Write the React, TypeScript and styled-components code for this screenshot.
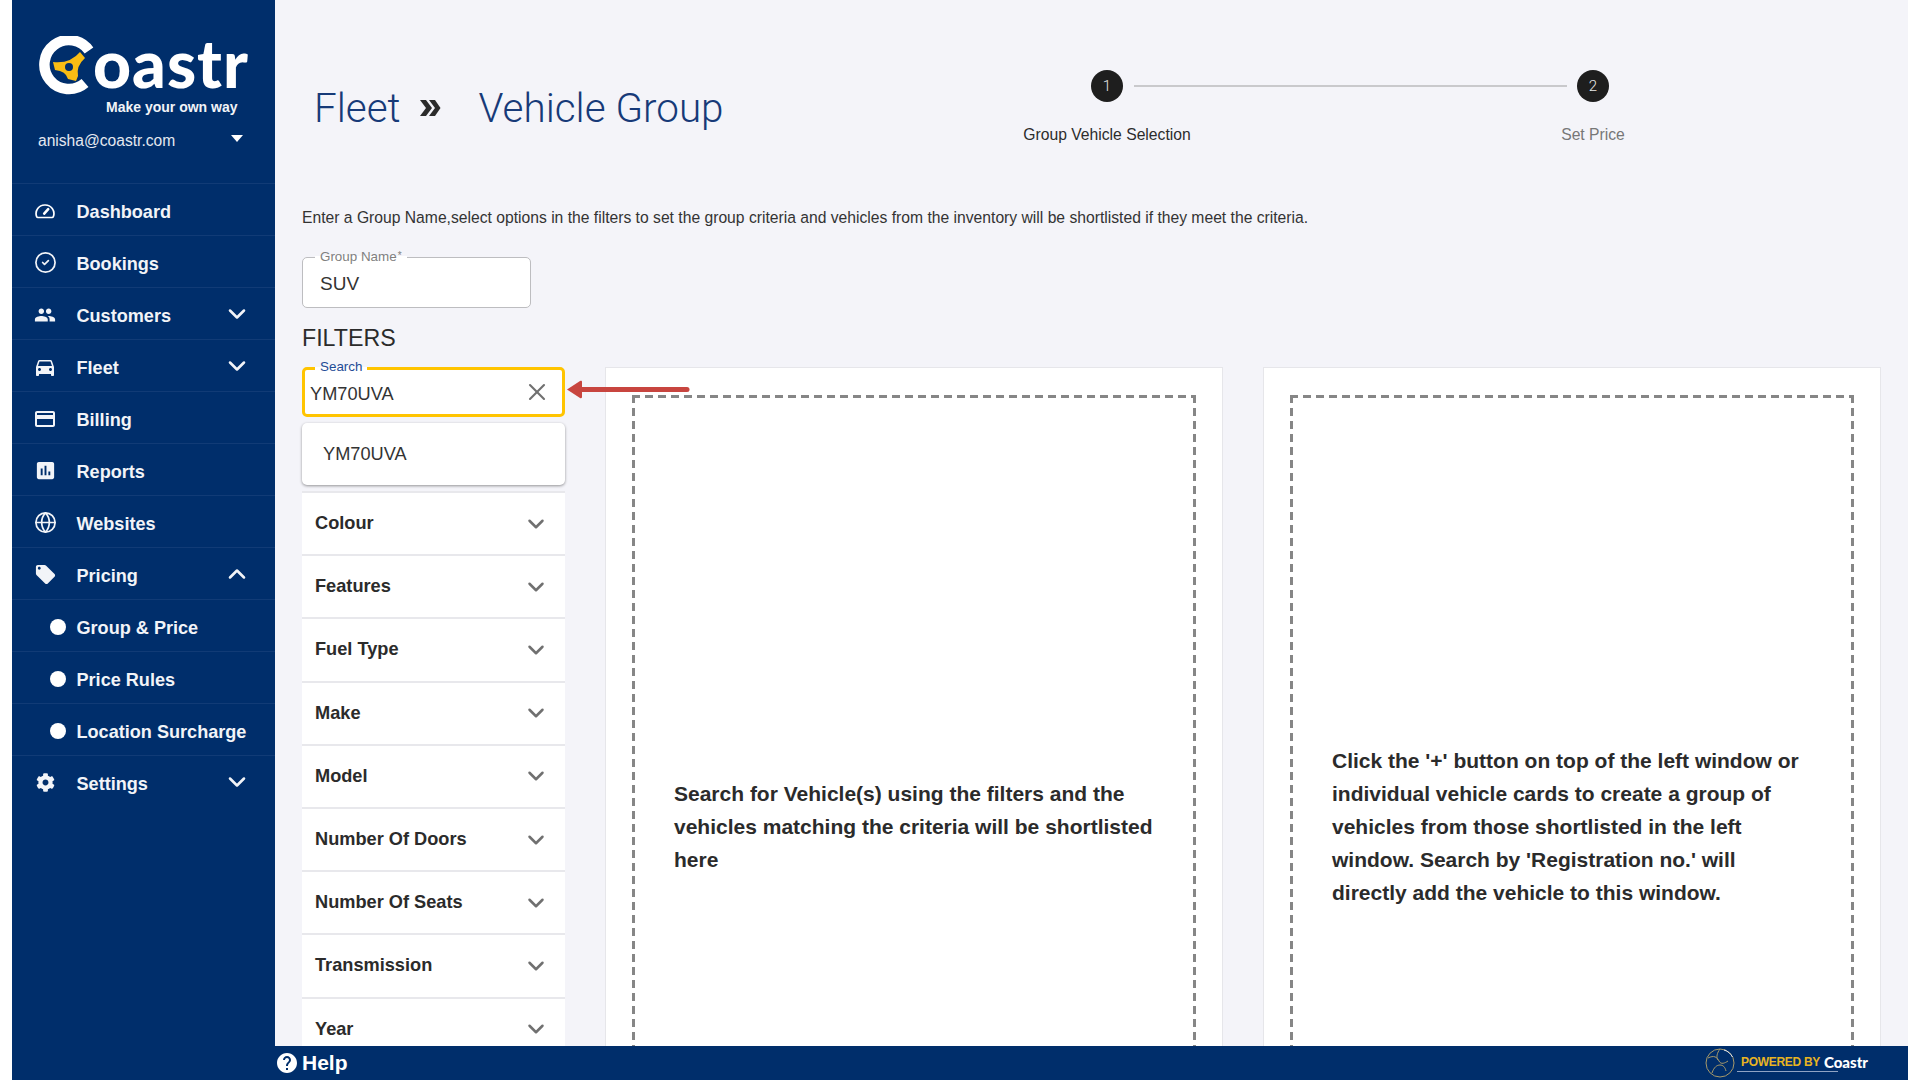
import React from "react";
import styled, { createGlobalStyle } from "styled-components";
import {
  MdAssessment,
  MdCreditCard,
  MdDirectionsCar,
  MdHelp,
  MdLocalOffer,
  MdPeople,
} from "react-icons/md";
import { FaCog } from "react-icons/fa";
import { ChevronDown, ChevronUp, CircleCheck, Globe, X } from "lucide-react";

const GlobalStyle = createGlobalStyle`
  html, body {
    margin: 0;
    padding: 0;
    background: #fff;
    overflow: hidden;
  }
  body {
    font-family: "Liberation Sans", Arial, sans-serif;
  }
`;

const Page = styled.div`
  width: 1920px;
  height: 1080px;
  box-sizing: border-box;
  padding: 0 12px;
  display: flex;
  flex-direction: column;
`;

const Body = styled.div`
  flex: 1;
  min-height: 0;
  display: flex;
`;

const Sidebar = styled.aside`
  width: 263px;
  flex: none;
  background: #002e6b;
  color: #fff;
  display: flex;
  flex-direction: column;
`;

const Brand = styled.div`
  height: 183px;
  box-sizing: border-box;
  padding: 36px 0 0 26px;
`;

const LogoRow = styled.div`
  display: flex;
  align-items: flex-start;
  height: 60px;
`;

const LogoText = styled.span`
  font-family: "Lato", "Liberation Sans", sans-serif;
  font-weight: 900;
  font-size: 66px;
  line-height: 60px;
  letter-spacing: 1px;
  margin: -3px 0 0 -7px;
`;

const Tagline = styled.div`
  font-size: 14px;
  font-weight: 700;
  line-height: 18px;
  color: #f1f3f7;
  margin: 2px 0 0 68px;
`;

const Email = styled.div`
  display: flex;
  justify-content: space-between;
  align-items: center;
  width: 205px;
  font-size: 15.6px;
  line-height: 20px;
  color: #e4e8f0;
  margin-top: 15px;
`;

const Caret = styled.span`
  width: 0;
  height: 0;
  border-left: 6px solid transparent;
  border-right: 6px solid transparent;
  border-top: 7px solid #fff;
  margin: 0 0 5px 0;
`;

const NavRow = styled.div`
  height: 52px;
  box-sizing: border-box;
  border-top: 1px solid #113b76;
  padding: 6px 24px 0 0;
  display: flex;
  align-items: center;
  font-size: 18.1px;
  font-weight: 700;
  color: #f2f4f8;
`;

const NavIcon = styled.span`
  width: 64.500px;
  padding-left: 23px;
  box-sizing: border-box;
  flex: none;
  display: flex;
  margin-top: -4px;
`;

const NavDot = styled.span`
  width: 16px;
  height: 16px;
  border-radius: 50%;
  background: #fff;
  margin: -4px 10.500px 0 38px;
  flex: none;
`;

const NavLabel = styled.span`
  flex: 1;
`;

const NavChevron = styled.span`
  display: flex;
  margin-top: -6px;
`;

const Main = styled.main`
  flex: 1;
  min-width: 0;
  background: #f4f4f9;
  padding: 0 27px;
  overflow: hidden;
`;

const Header = styled.div`
  display: flex;
  height: 162px;
`;

const Title = styled.h1`
  margin: 86px 0 0 12px;
  height: 46px;
  width: 777px;
  flex: none;
  font-family: "Roboto", "Liberation Sans", sans-serif;
  font-size: 40.4px;
  line-height: 46px;
  font-weight: 300;
  color: #173a78;
  display: flex;
  align-items: center;
  white-space: nowrap;
`;

const TitleArrows = styled.svg`
  width: 22px;
  height: 20px;
  margin: 0 38px 2px 18px;
  flex: none;
`;

const Stepper = styled.div`
  width: 518px;
  height: 88px;
  margin-top: 70px;
  display: grid;
  grid-template-columns: 32px 1fr 32px;
  grid-template-rows: 32px auto;
  row-gap: 23px;
  align-items: center;
`;

const StepDot = styled.span`
  width: 32px;
  height: 32px;
  border-radius: 50%;
  background: #1e1e1e;
  color: #e8e8e8;
  font-family: "Roboto", sans-serif;
  font-weight: 300;
  font-size: 15px;
  display: flex;
  align-items: center;
  justify-content: center;
`;

const StepLine = styled.span`
  height: 2px;
  background: #c9c9cc;
  margin: 0 10px 0 11px;
`;

const StepLabel = styled.span<{ $column: number; $active?: boolean }>`
  grid-column: ${(p) => p.$column};
  justify-self: center;
  white-space: nowrap;
  font-size: 15.7px;
  line-height: 18px;
  margin-top: -13px;
  color: ${(p) => (p.$active ? "#2c2c2c" : "#777")};
`;

const Intro = styled.p`
  margin: 46px 0 0;
  font-size: 15.68px;
  line-height: 20px;
  color: #333;
  white-space: nowrap;
`;

const GroupField = styled.div`
  position: relative;
  width: 229px;
  height: 51px;
  box-sizing: border-box;
  margin-top: 29px;
  background: #fff;
  border: 1px solid #bdbdc0;
  border-radius: 5px;
  padding: 15px 0 0 17px;
  font-size: 19px;
  line-height: 22px;
  color: #333;
`;

const FieldLegend = styled.span<{ $color: string; $left: number; $top: number }>`
  position: absolute;
  top: ${(p) => p.$top}px;
  left: ${(p) => p.$left}px;
  padding: 0 5px;
  font-size: 13.4px;
  line-height: 16px;
  color: ${(p) => p.$color};
  background: linear-gradient(#f4f4f9 0 50%, #fff 50% 100%);
  white-space: nowrap;
`;

const RequiredMark = styled.span`
  font-size: 10px;
  vertical-align: 2px;
  margin-left: 1px;
`;

const FiltersTitle = styled.h2`
  margin: 16px 0 0;
  font-size: 23.2px;
  line-height: 28px;
  font-weight: 400;
  color: #2b2b2b;
`;

const FilterGrid = styled.div`
  display: grid;
  grid-template-columns: 263px 1fr 1fr;
  column-gap: 40px;
  margin-top: 15px;
`;

const FilterColumn = styled.div`
  position: relative;
`;

const SearchBox = styled.div`
  position: relative;
  height: 50px;
  box-sizing: border-box;
  background: #fff;
  border: 3px solid #ffc400;
  border-radius: 5px;
  display: flex;
  align-items: center;
  justify-content: space-between;
  padding: 5px 11px 0 5px;
  font-size: 18.2px;
  color: #333;
`;

const ClearIcon = styled.span`
  display: flex;
  color: #707070;
  margin-top: -5px;
`;

const PointerArrow = styled.svg`
  position: absolute;
  left: 264px;
  top: 13px;
  width: 126px;
  height: 24px;
  overflow: visible;
`;

const Dropdown = styled.div`
  position: absolute;
  left: 0;
  right: 0;
  top: 56px;
  height: 62px;
  box-sizing: border-box;
  background: #fff;
  border-radius: 5px;
  padding: 0 0 0 21px;
  display: flex;
  align-items: center;
  font-size: 18.2px;
  color: #333;
  box-shadow: 0 1px 3px rgba(0, 0, 0, 0.4);
`;

const Accordion = styled.div`
  margin-top: 74px;
`;

const FilterRow = styled.div`
  height: 63.2px;
  box-sizing: border-box;
  background: #fff;
  border-top: 2px solid #e8e8ec;
  display: flex;
  align-items: center;
  justify-content: space-between;
  padding: 0 16px 0 13px;
  font-size: 18.2px;
  font-weight: 700;
  color: #2b2b2b;
`;

const RowChevron = styled.span`
  display: flex;
  color: #707070;
`;

const Panel = styled.section`
  height: 920px;
  box-sizing: border-box;
  background: #fff;
  border: 1px solid #e6e6ea;
  padding: 27px 26px 0 26px;
`;

const DashedBox = styled.div`
  height: 862px;
  box-sizing: border-box;
  padding: 0 41px 0 42px;
  display: flex;
  align-items: center;
  background:
    repeating-linear-gradient(90deg, #868686 0 8px, transparent 8px 13px) top / 100% 3px no-repeat,
    repeating-linear-gradient(90deg, #868686 0 8px, transparent 8px 13px) bottom / 100% 3px no-repeat,
    repeating-linear-gradient(180deg, #868686 0 8px, transparent 8px 13px) left / 3px 100% no-repeat,
    repeating-linear-gradient(180deg, #868686 0 8px, transparent 8px 13px) right / 3px 100% no-repeat;
`;

const PanelText = styled.p`
  margin: 0;
  font-size: 21px;
  line-height: 33px;
  font-weight: 700;
  color: #2b2b2b;
`;

const Footer = styled.footer`
  height: 34px;
  flex: none;
  box-sizing: border-box;
  background: #002e6b;
  display: flex;
  align-items: center;
  justify-content: space-between;
  padding: 0 40px 0 263px;
  color: #fff;
`;

const HelpLink = styled.div`
  display: flex;
  align-items: center;
  gap: 3px;
  font-size: 21px;
  font-weight: 700;
`;

const Powered = styled.div`
  position: relative;
  display: flex;
  align-items: center;
  height: 34px;
`;

const PoweredText = styled.span`
  font-size: 12px;
  font-weight: 700;
  color: #e8b422;
  letter-spacing: -0.3px;
  margin: -3px 0 0 6px;
  white-space: nowrap;
`;

const PoweredBrand = styled.span`
  font-family: "Lato", "Liberation Sans", sans-serif;
  font-size: 15px;
  font-weight: 900;
  color: #fff;
  margin: -3px 0 0 4px;
`;

const PoweredRule = styled.span`
  position: absolute;
  left: 32px;
  right: 30px;
  top: 25px;
  height: 1px;
  background: #8fa3c4;
`;

const navItems: {
  label: string;
  icon?: React.ReactNode;
  chevron?: "up" | "down";
  sub?: boolean;
}[] = [
  {
    label: "Dashboard",
    icon: (
      <svg width="20" height="20" viewBox="0 0 20 20" fill="none" stroke="#fff" strokeWidth="1.7">
        <path d="M3 16.500h14c.8 0 1.200-.4 1.400-1A8.600 8.600 0 0 0 10 4a8.600 8.600 0 0 0-8.400 11.500c.2.600.6 1 1.400 1z" />
        <path d="M9.200 12.600l4-4.400" strokeWidth="2.600" strokeLinecap="round" />
      </svg>
    ),
  },
  {
    label: "Bookings",
    icon: <CircleCheck size={23} strokeWidth={1.8} style={{ margin: "-1.500px" }} />,
  },
  { label: "Customers", icon: <MdPeople size={22} style={{ margin: "-3px -1px" }} />, chevron: "down" },
  { label: "Fleet", icon: <MdDirectionsCar size={24} style={{ margin: "-2px" }} />, chevron: "down" },
  { label: "Billing", icon: <MdCreditCard size={24} style={{ margin: "-2px" }} /> },
  { label: "Reports", icon: <MdAssessment size={23} style={{ margin: "-1.500px" }} /> },
  {
    label: "Websites",
    icon: <Globe size={23} strokeWidth={1.8} style={{ margin: "-1.500px" }} />,
  },
  { label: "Pricing", icon: <MdLocalOffer size={23} style={{ margin: "-3px -1px" }} />, chevron: "up" },
  { label: "Group & Price", sub: true },
  { label: "Price Rules", sub: true },
  { label: "Location Surcharge", sub: true },
  { label: "Settings", icon: <FaCog size={19} style={{ margin: "0 0 0 1px" }} />, chevron: "down" },
];

const filters = [
  "Colour",
  "Features",
  "Fuel Type",
  "Make",
  "Model",
  "Number Of Doors",
  "Number Of Seats",
  "Transmission",
  "Year",
];

const CoastrMark: React.FC = () => (
  <svg width="62" height="60" viewBox="0 0 62 60" fill="none" style={{ flex: "none" }}>
    <path d="M51 14.500A24.500 24.500 0 1 0 47 47" stroke="#fff" strokeWidth="10.500" />
    <path d="M42 16l5 6Q38 30 40 40l-2 5-8-2Q28 35 17 34l-2-8Q32 28 42 16z" fill="#f9bd13" />
    <circle cx="31" cy="31" r="4" fill="#002e6b" />
  </svg>
);

export default function App() {
  return (
    <>
      <GlobalStyle />
      <Page>
        <Body>
          <Sidebar>
            <Brand>
              <LogoRow>
                <CoastrMark />
                <LogoText>oastr</LogoText>
              </LogoRow>
              <Tagline>Make your own way</Tagline>
              <Email>
                anisha@coastr.com
                <Caret />
              </Email>
            </Brand>
            {navItems.map((item) => (
              <NavRow key={item.label}>
                {item.sub ? <NavDot /> : <NavIcon>{item.icon}</NavIcon>}
                <NavLabel>{item.label}</NavLabel>
                {item.chevron && (
                  <NavChevron>
                    {item.chevron === "up" ? (
                      <ChevronUp size={28} strokeWidth={2.2} />
                    ) : (
                      <ChevronDown size={28} strokeWidth={2.2} />
                    )}
                  </NavChevron>
                )}
              </NavRow>
            ))}
          </Sidebar>
          <Main>
            <Header>
              <Title>
                Fleet
                <TitleArrows viewBox="0 0 22 20">
                  <path d="M1 2h6l6 8-6 8H1l6-8zM10 2h6l5.500 8-5.500 8h-6l6-8z" fill="#2b2b2b" />
                </TitleArrows>
                Vehicle Group
              </Title>
              <Stepper>
                <StepDot>1</StepDot>
                <StepLine />
                <StepDot>2</StepDot>
                <StepLabel $column={1} $active>
                  Group Vehicle Selection
                </StepLabel>
                <StepLabel $column={3}>Set Price</StepLabel>
              </Stepper>
            </Header>
            <Intro>
              Enter a Group Name,select options in the filters to set the group criteria and vehicles from the inventory will be shortlisted if they meet the criteria.
            </Intro>
            <GroupField>
              <FieldLegend $color="#808080" $left={12} $top={-10}>
                Group Name<RequiredMark>*</RequiredMark>
              </FieldLegend>
              SUV
            </GroupField>
            <FiltersTitle>FILTERS</FiltersTitle>
            <FilterGrid>
              <FilterColumn>
                <SearchBox>
                  <FieldLegend $color="#1f4c96" $left={10} $top={-11}>
                    Search
                  </FieldLegend>
                  YM70UVA
                  <ClearIcon>
                    <X size={28} strokeWidth={1.8} />
                  </ClearIcon>
                </SearchBox>
                <PointerArrow viewBox="0 0 126 24">
                  <path d="M15 9.500h106" stroke="#c8453f" strokeWidth="5" strokeLinecap="round" />
                  <path d="M1 9.500L14 1c1.500-.5 2 0 2 1v15c0 1-.5 1.500-2 1z" fill="#c8453f" />
                </PointerArrow>
                <Dropdown>YM70UVA</Dropdown>
                <Accordion>
                  {filters.map((name) => (
                    <FilterRow key={name}>
                      {name}
                      <RowChevron>
                        <ChevronDown size={26} strokeWidth={2.3} />
                      </RowChevron>
                    </FilterRow>
                  ))}
                </Accordion>
              </FilterColumn>
              <Panel>
                <DashedBox>
                  <PanelText>
                    Search for Vehicle(s) using the filters and the vehicles matching the criteria will be shortlisted here
                  </PanelText>
                </DashedBox>
              </Panel>
              <Panel>
                <DashedBox>
                  <PanelText>
                    Click the '+' button on top of the left window or individual vehicle cards to create a group of vehicles from those shortlisted in the left window. Search by 'Registration no.' will directly add the vehicle to this window.
                  </PanelText>
                </DashedBox>
              </Panel>
            </FilterGrid>
          </Main>
        </Body>
        <Footer>
          <HelpLink>
            <MdHelp size={24} />
            Help
          </HelpLink>
          <Powered>
            <svg width="30" height="32" viewBox="0 0 30 32" fill="none" stroke="#a89a6a" strokeWidth="1">
              <circle cx="15" cy="16" r="14" />
              <path d="M3 11c6-3 9-1 11 3s6 2 9 0M7 26c2-6 5-8 8-8s5 2 6 6M15 2c-3 4-4 8-2 11" />
              <path d="M19 3c4 1 7 4 8.500 7" stroke="#dfe5ef" />
            </svg>
            <PoweredText>POWERED BY</PoweredText>
            <PoweredBrand>Coastr</PoweredBrand>
            <PoweredRule />
          </Powered>
        </Footer>
      </Page>
    </>
  );
}
